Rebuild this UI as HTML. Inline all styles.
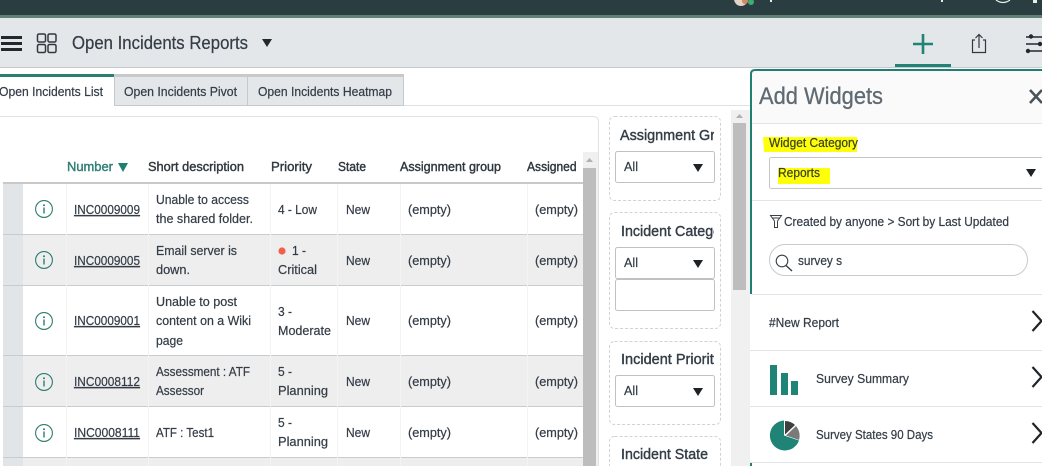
<!DOCTYPE html>
<html><head><meta charset="utf-8"><style>
html,body{margin:0;padding:0;background:#fff;width:1042px;height:466px;overflow:hidden}
svg{display:block}
text{font-family:"Liberation Sans",sans-serif;fill:#343d47;font-size:13px;stroke:#343d47;stroke-width:.22px}
.h{font-size:13px;fill:#30373d;stroke:#30373d;stroke-width:.4px}
.u{text-decoration:underline}
.f{font-size:15px;stroke-width:.4px}
.y{fill:#3a4020;stroke:#3a4020}
</style></head><body>
<svg width="1042" height="466" viewBox="0 0 1042 466" xmlns="http://www.w3.org/2000/svg">
<defs>
<clipPath id="c0"><rect x="520" y="155" width="59" height="25"/></clipPath>
<clipPath id="c1"><rect x="612" y="120" width="102" height="30"/></clipPath>
<clipPath id="c2"><rect x="612" y="216" width="102" height="30"/></clipPath>
<clipPath id="c3"><rect x="612" y="345" width="102" height="28"/></clipPath>
<symbol id="info" viewBox="0 0 18 18" overflow="visible"><circle cx="9" cy="9" r="8.400" fill="none" stroke="#2e7d70" stroke-width="1.100"/><rect x="8.300" y="7.500" width="1.400" height="6" fill="#2e7d70"/><circle cx="9" cy="5.200" r="1" fill="#2e7d70"/></symbol>
<path id="tri" d="M-5 -4H5L0 4Z" fill="#1d2226"/>
<path id="chev" d="M0 0L9 10L0 20" fill="none" stroke="#1f2428" stroke-width="2.200"/>
</defs>

<!-- top bars -->
<rect width="1042" height="15" fill="#2a3e42"/>
<rect y="15" width="1042" height="3" fill="#5f8173"/>
<circle cx="741" cy="-1" r="7" fill="#e5d3c6"/><circle cx="745" cy="1" r="3" fill="#d08a63"/><circle cx="751" cy="2" r="3" fill="#3dae72"/>
<rect x="770" y="0" width="2" height="2" fill="#e8eeee"/>
<rect x="941" y="0" width="2" height="2" fill="#e8eeee"/>
<path d="M996 0Q1003 5 1010 0" fill="none" stroke="#e8eeee" stroke-width="1.200"/>
<rect x="1033" y="0" width="4" height="3" fill="#e8eeee"/>

<!-- toolbar -->
<rect y="18" width="1042" height="49" fill="#e4e7ea"/>
<rect y="67" width="1042" height="1" fill="#c6cacd"/>
<rect x="1" y="36" width="21" height="3" fill="#23282c"/><rect x="1" y="42" width="21" height="3" fill="#23282c"/><rect x="1" y="48" width="21" height="3" fill="#23282c"/>
<g fill="none" stroke="#32383d" stroke-width="1.500"><rect x="37.500" y="34" width="8" height="8" rx="1.500"/><rect x="48" y="34" width="8" height="8" rx="1.500"/><rect x="37.500" y="44.500" width="8" height="8" rx="1.500"/><rect x="48" y="44.500" width="8" height="8" rx="1.500"/></g>
<text x="72" y="49" style="font-size:18px" textLength="176" lengthAdjust="spacingAndGlyphs">Open Incidents Reports</text>
<path d="M262 39H272L267 47Z" fill="#23282c"/>
<path d="M923 34V54M913 44H933" stroke="#1f8476" stroke-width="2.600"/>
<rect x="895" y="64" width="56" height="3" fill="#1f8476"/>
<path d="M975 40H972.500V52.500H985.500V40H983M979 48V35M975.500 38L979 34.500L982.500 38" fill="none" stroke="#32383d" stroke-width="1.200"/>
<g stroke="#23282c" stroke-width="1.500"><path d="M1026 37H1042M1026 44H1042M1026 51H1042"/></g>
<circle cx="1031" cy="36.500" r="2.200" fill="#23282c"/><circle cx="1040" cy="44" r="2.200" fill="#23282c"/><circle cx="1028" cy="51" r="2.200" fill="#23282c"/>

<!-- tabs -->
<rect x="403" y="105" width="347" height="1" fill="#dfe1e3"/>
<rect x="0" y="74" width="114" height="3" fill="#2a7f72"/>
<rect x="114.500" y="76" width="133" height="29.500" fill="#e4e7ea" stroke="#c6cacd"/>
<rect x="247.500" y="76" width="156" height="29.500" fill="#e4e7ea" stroke="#c6cacd"/>
<rect x="114" y="74" width="290" height="3" fill="#c9c9c9"/>
<text x="-1" y="96" textLength="104" lengthAdjust="spacingAndGlyphs">Open Incidents List</text>
<text x="124" y="96" textLength="113" lengthAdjust="spacingAndGlyphs">Open Incidents Pivot</text>
<text x="258" y="96" textLength="134" lengthAdjust="spacingAndGlyphs">Open Incidents Heatmap</text>

<!-- list panel -->
<path d="M0 116.500H593Q598.500 116.500 598.500 122V466" fill="none" stroke="#e2e2e2"/>

<!-- column headers -->
<text x="67" y="171" class="h" style="fill:#2d7f73;stroke:#2d7f73" textLength="46" lengthAdjust="spacingAndGlyphs">Number</text>
<path d="M118 163H128L123 172Z" fill="#1f7f70"/>
<text x="148" y="171" class="h" textLength="96" lengthAdjust="spacingAndGlyphs">Short description</text>
<text x="271" y="171" class="h" textLength="41" lengthAdjust="spacingAndGlyphs">Priority</text>
<text x="338" y="171" class="h" textLength="28" lengthAdjust="spacingAndGlyphs">State</text>
<text x="400" y="171" class="h" textLength="101" lengthAdjust="spacingAndGlyphs">Assignment group</text>
<text x="527" y="171" class="h" clip-path="url(#c0)" textLength="63" lengthAdjust="spacingAndGlyphs">Assigned to</text>
<rect x="3" y="182" width="580" height="2" fill="#c9c9c9"/>

<!-- row backgrounds -->
<rect x="3" y="235" width="580" height="50" fill="#eeeeee"/>
<rect x="3" y="356" width="580" height="50" fill="#eeeeee"/>
<rect x="3" y="458" width="580" height="8" fill="#eeeeee"/>
<rect x="3" y="184" width="20" height="282" fill="#e1e5e8"/>
<g fill="#c9ccce"><rect x="3" y="234" width="580" height="1"/><rect x="3" y="285" width="580" height="1"/><rect x="3" y="355" width="580" height="1"/><rect x="3" y="406" width="580" height="1"/><rect x="3" y="457" width="580" height="1"/></g>
<g fill="#f3f3f3"><rect x="66" y="184" width="1" height="282"/><rect x="148" y="184" width="1" height="282"/><rect x="270" y="184" width="1" height="282"/><rect x="337" y="184" width="1" height="282"/><rect x="400" y="184" width="1" height="282"/><rect x="527" y="184" width="1" height="282"/></g>

<!-- info icons -->
<use href="#info" x="35" y="200" width="18" height="18"/>
<use href="#info" x="35" y="251" width="18" height="18"/>
<use href="#info" x="35" y="312" width="18" height="18"/>
<use href="#info" x="35" y="373" width="18" height="18"/>
<use href="#info" x="35" y="424" width="18" height="18"/>

<!-- numbers -->
<g>
<text x="74" y="214" class="u" textLength="66" lengthAdjust="spacingAndGlyphs">INC0009009</text>
<text x="74" y="265" class="u" textLength="66" lengthAdjust="spacingAndGlyphs">INC0009005</text>
<text x="74" y="325" class="u" textLength="66" lengthAdjust="spacingAndGlyphs">INC0009001</text>
<text x="74" y="386" class="u" textLength="66" lengthAdjust="spacingAndGlyphs">INC0008112</text>
<text x="74" y="437" class="u" textLength="66" lengthAdjust="spacingAndGlyphs">INC0008111</text>
</g>

<!-- descriptions -->
<text x="156" y="204" textLength="93" lengthAdjust="spacingAndGlyphs">Unable to access</text>
<text x="156" y="223" textLength="97" lengthAdjust="spacingAndGlyphs">the shared folder.</text>
<text x="156" y="255" textLength="81" lengthAdjust="spacingAndGlyphs">Email server is</text>
<text x="156" y="274" textLength="34" lengthAdjust="spacingAndGlyphs">down.</text>
<text x="156" y="306" textLength="81" lengthAdjust="spacingAndGlyphs">Unable to post</text>
<text x="156" y="325" textLength="95" lengthAdjust="spacingAndGlyphs">content on a Wiki</text>
<text x="156" y="345" textLength="27" lengthAdjust="spacingAndGlyphs">page</text>
<text x="156" y="376" textLength="94" lengthAdjust="spacingAndGlyphs">Assessment : ATF</text>
<text x="156" y="395" textLength="48" lengthAdjust="spacingAndGlyphs">Assessor</text>
<text x="156" y="437" textLength="58" lengthAdjust="spacingAndGlyphs">ATF : Test1</text>

<!-- priority -->
<text x="278" y="214" textLength="39" lengthAdjust="spacingAndGlyphs">4 - Low</text>
<circle cx="282" cy="251" r="3.600" fill="#f0604a"/>
<text x="292" y="255" textLength="14" lengthAdjust="spacingAndGlyphs">1 -</text>
<text x="278" y="274" textLength="39" lengthAdjust="spacingAndGlyphs">Critical</text>
<text x="278" y="316" textLength="14" lengthAdjust="spacingAndGlyphs">3 -</text>
<text x="278" y="335" textLength="53" lengthAdjust="spacingAndGlyphs">Moderate</text>
<text x="278" y="376" textLength="14" lengthAdjust="spacingAndGlyphs">5 -</text>
<text x="278" y="395" textLength="50" lengthAdjust="spacingAndGlyphs">Planning</text>
<text x="278" y="427" textLength="14" lengthAdjust="spacingAndGlyphs">5 -</text>
<text x="278" y="446" textLength="50" lengthAdjust="spacingAndGlyphs">Planning</text>

<!-- state + groups -->
<text x="346" y="214" textLength="24" lengthAdjust="spacingAndGlyphs">New</text>
<text x="346" y="265" textLength="24" lengthAdjust="spacingAndGlyphs">New</text>
<text x="346" y="325" textLength="24" lengthAdjust="spacingAndGlyphs">New</text>
<text x="346" y="386" textLength="24" lengthAdjust="spacingAndGlyphs">New</text>
<text x="346" y="437" textLength="24" lengthAdjust="spacingAndGlyphs">New</text>
<text x="408" y="214" textLength="43" lengthAdjust="spacingAndGlyphs">(empty)</text>
<text x="408" y="265" textLength="43" lengthAdjust="spacingAndGlyphs">(empty)</text>
<text x="408" y="325" textLength="43" lengthAdjust="spacingAndGlyphs">(empty)</text>
<text x="408" y="386" textLength="43" lengthAdjust="spacingAndGlyphs">(empty)</text>
<text x="408" y="437" textLength="43" lengthAdjust="spacingAndGlyphs">(empty)</text>
<text x="535" y="214" textLength="43" lengthAdjust="spacingAndGlyphs">(empty)</text>
<text x="535" y="265" textLength="43" lengthAdjust="spacingAndGlyphs">(empty)</text>
<text x="535" y="325" textLength="43" lengthAdjust="spacingAndGlyphs">(empty)</text>
<text x="535" y="386" textLength="43" lengthAdjust="spacingAndGlyphs">(empty)</text>
<text x="535" y="437" textLength="43" lengthAdjust="spacingAndGlyphs">(empty)</text>

<!-- table scrollbar -->
<rect x="583" y="152" width="15" height="314" fill="#f0f0f0"/>
<rect x="583" y="168" width="13" height="298" fill="#bdbdbd"/>
<path d="M586 162L589.500 158L593 162Z" fill="#b0b0b0"/>

<!-- filter cards -->
<g fill="#fff" stroke="#d2d2d2" stroke-dasharray="3 2">
<rect x="609.500" y="116.500" width="111" height="84" rx="5"/>
<rect x="609.500" y="212.500" width="111" height="116" rx="5"/>
<rect x="609.500" y="341.500" width="111" height="83" rx="5"/>
<rect x="609.500" y="436.500" width="111" height="40" rx="5"/>
</g>
<text x="620" y="140" class="f" clip-path="url(#c1)" textLength="119" lengthAdjust="spacingAndGlyphs">Assignment Group</text>
<text x="621" y="236" class="f" clip-path="url(#c2)" textLength="112" lengthAdjust="spacingAndGlyphs">Incident Category</text>
<text x="621" y="364" class="f" clip-path="url(#c3)" textLength="100" lengthAdjust="spacingAndGlyphs">Incident Priority</text>
<text x="621" y="459" class="f" textLength="87" lengthAdjust="spacingAndGlyphs">Incident State</text>
<g fill="#fff" stroke="#bfc2c5">
<rect x="615.500" y="151.500" width="99" height="31" rx="2"/>
<rect x="615.500" y="247.500" width="99" height="31" rx="2"/>
<rect x="615.500" y="279.500" width="99" height="31" rx="2"/>
<rect x="615.500" y="375.500" width="99" height="31" rx="2"/>
</g>
<text x="624" y="171" textLength="14" lengthAdjust="spacingAndGlyphs">All</text>
<text x="624" y="267" textLength="14" lengthAdjust="spacingAndGlyphs">All</text>
<text x="624" y="395" textLength="14" lengthAdjust="spacingAndGlyphs">All</text>
<use href="#tri" x="698" y="168"/>
<use href="#tri" x="698" y="264"/>
<use href="#tri" x="698" y="392"/>

<!-- page scrollbar -->
<rect x="731" y="110" width="19" height="356" fill="#f0f0f0"/>
<rect x="733" y="123" width="13" height="167" fill="#bdbdbd"/>
<path d="M736 118L739.500 114L743 118Z" fill="#b0b0b0"/>

<!-- add widgets panel -->
<rect x="750" y="69" width="292" height="397" fill="#fff"/>
<rect x="752" y="71" width="290" height="52" fill="#fafafa"/>
<path d="M751 294V74Q751 70 755 70H1042" fill="none" stroke="#1f7f70" stroke-width="2"/>
<rect x="750" y="462" width="2" height="4" fill="#1f7f70"/>
<rect x="752" y="123" width="290" height="1" fill="#e4e4e4"/>
<text x="759" y="104" style="font-size:24px;fill:#5f6a72;stroke:#5f6a72;stroke-width:.3px" textLength="124" lengthAdjust="spacingAndGlyphs">Add Widgets</text>
<path d="M1030 90L1042 103M1042 90L1030 103" stroke="#4b5359" stroke-width="2.600"/>

<path d="M763 137H857V152H764Z" fill="#ffff0a"/>
<text x="769" y="147" class="y" textLength="89" lengthAdjust="spacingAndGlyphs">Widget Category</text>
<rect x="769.500" y="157.500" width="280" height="31" rx="2" fill="#fff" stroke="#c4c6c8"/>
<rect x="778" y="168" width="52" height="16" fill="#ffff0a"/>
<text x="778" y="177" class="y" textLength="42" lengthAdjust="spacingAndGlyphs">Reports</text>
<use href="#tri" x="1031" y="173"/>
<rect x="752" y="200" width="290" height="1" fill="#e4e4e4"/>

<path d="M770.500 215.500H781.500L777.500 221V227.500H774.500V221ZM772.500 218H779.500" fill="none" stroke="#3a4046" stroke-width="1"/>
<text x="784" y="226" textLength="225" lengthAdjust="spacingAndGlyphs">Created by anyone &gt; Sort by Last Updated</text>
<rect x="769.500" y="244.500" width="258" height="31" rx="15.500" fill="#fff" stroke="#c8cacc"/>
<circle cx="782" cy="261" r="5.800" fill="none" stroke="#3a4046" stroke-width="1.100"/>
<path d="M786 265.500L792 271" stroke="#3a4046" stroke-width="1.400"/>
<text x="798" y="265" textLength="44" lengthAdjust="spacingAndGlyphs">survey s</text>
<rect x="752" y="294" width="290" height="1" fill="#e4e4e4"/>

<text x="769" y="327" textLength="70" lengthAdjust="spacingAndGlyphs">#New Report</text>
<use href="#chev" x="1032.500" y="311"/>
<rect x="750" y="350" width="292" height="1" fill="#e4e4e4"/>

<g fill="#1f8476"><rect x="770" y="365" width="7" height="30"/><rect x="781" y="373" width="7" height="22"/><rect x="791" y="381" width="7" height="14"/></g>
<text x="816" y="383" textLength="93" lengthAdjust="spacingAndGlyphs">Survey Summary</text>
<use href="#chev" x="1032.500" y="367"/>
<rect x="750" y="406" width="292" height="1" fill="#e4e4e4"/>

<path d="M784 435.500L799 440.500A15 15 0 1 1 784 420.500Z" fill="#1f8476"/>
<path d="M785 434.500V421A15 15 0 0 1 795 425Z" fill="#3d3f41"/>
<path d="M786 435.500L796 426A15 15 0 0 1 799 440Z" fill="#7a7a7a"/>
<text x="816" y="439" textLength="117" lengthAdjust="spacingAndGlyphs">Survey States 90 Days</text>
<use href="#chev" x="1032.500" y="423"/>
<rect x="750" y="462" width="292" height="1" fill="#e4e4e4"/>
</svg>
</body></html>
